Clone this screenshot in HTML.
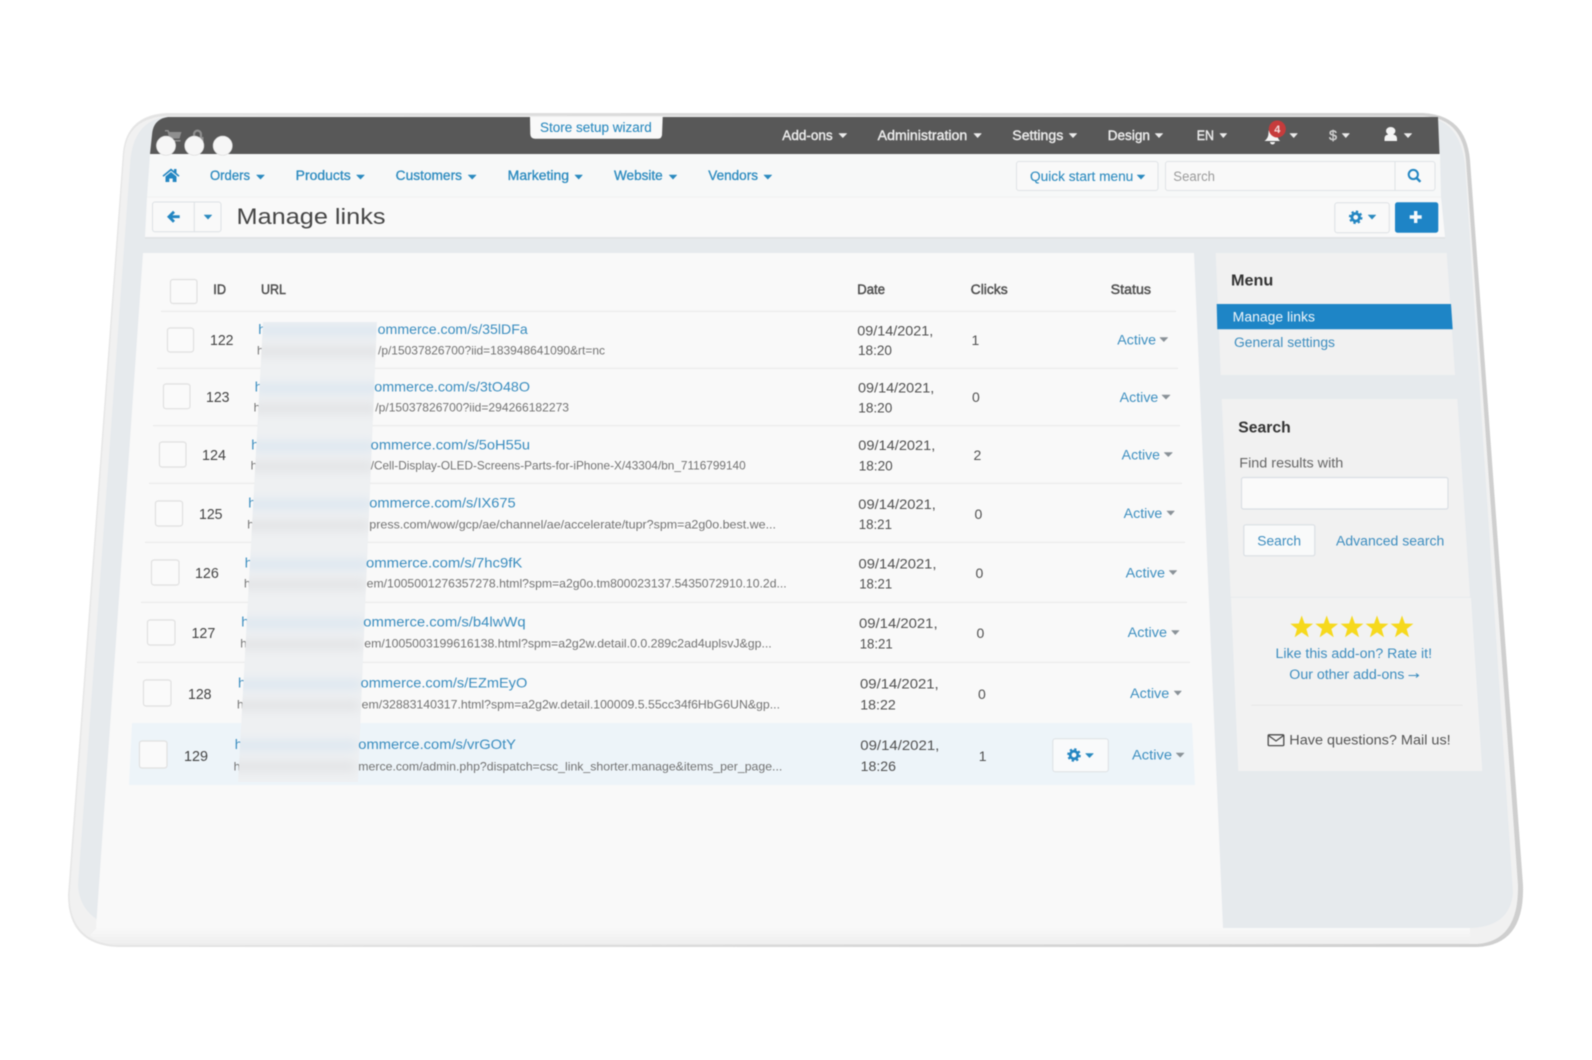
<!DOCTYPE html>
<html lang="en">
<head>
<meta charset="utf-8">
<title>Manage links</title>
<style>
html,body{margin:0;padding:0;background:#fff;width:1592px;height:1060px;overflow:hidden}
svg{display:block;filter:blur(.55px)}
text{font-family:"Liberation Sans",sans-serif;font-size:13.5px}
.top{fill:#ececec;stroke:#ececec;stroke-width:.4px;font-size:13.5px}
.nav{fill:#2b8abf;stroke:#2b8abf;stroke-width:.3px;font-size:13.5px}
.th{fill:#4f4f4f;stroke:#4f4f4f;stroke-width:.45px;font-size:13.5px}
.id{fill:#444;font-size:14.5px}
.lnk{fill:#3a8dbf;font-size:14px}
.sub{fill:#737373;font-size:12px}
.dt{fill:#505050;font-size:14px}
.ac{fill:#3d8fc0;font-size:13.5px}
.blue{fill:#3d8dbf;font-size:13.5px}
.cb{fill:#fafafa;stroke:#e0e0e0;stroke-width:1.2}
.ln{stroke:#e9e9e9;stroke-width:1.2}
.c{fill:#8a9298;stroke:#8a9298;stroke-width:.6;stroke-linejoin:round}
.cb2{fill:#2b8abf;stroke:#2b8abf;stroke-width:.6;stroke-linejoin:round}
.cw{fill:#ececec;stroke:#ececec;stroke-width:.6;stroke-linejoin:round}
</style>
</head>
<body>
<svg width="1592" height="1060" viewBox="0 0 1592 1060" xmlns="http://www.w3.org/2000/svg">
<defs>
<filter id="b" x="-20%" y="-300%" width="140%" height="700%"><feGaussianBlur stdDeviation="5"/></filter>
<linearGradient id="fb" x1="0" y1="0" x2="0" y2="1"><stop offset="0" stop-color="#f9f9f9"/><stop offset="1" stop-color="#eeeeee"/></linearGradient>
<linearGradient id="fo" x1="0" y1="0" x2="1" y2="0"><stop offset="0" stop-color="#e6e6e6"/><stop offset=".6" stop-color="#d6d6d6"/><stop offset="1" stop-color="#cfcfcf"/></linearGradient>
<clipPath id="bc"><polygon points="263,322 377,322 358,782 238,782"/></clipPath>
<g id="gear"><circle r="5.6" fill="none" stroke-width="2.4" stroke-dasharray="2.2 2.2"/><circle r="3.8" fill="none" stroke-width="2.8"/></g>
<polygon id="star" points="0,-12 2.88,-3.96 11.4,-3.7 4.66,1.51 7.05,9.7 0,4.9 -7.05,9.7 -4.66,1.51 -11.4,-3.7 -2.88,-3.96"/>
</defs>

<!-- device frame -->
<path d="M167,113 L1423,113 Q1466,115 1470,160 L1523,885 Q1525,945 1477,947 L118,947 Q68,945 68,895 L122.7,156 Q125,115 167,113 Z" fill="url(#fo)"/>
<path d="M167,116 L1423,116 Q1462,118 1466,160 L1518,885 Q1519,941 1477,944 L118,945 Q70,943 69.5,895 L124,156 Q126,118 167,116 Z" fill="#f1f1f1"/>
<path d="M97,928 L1470,928 L1470,944 L118,945 Q100,944 90,935 Z" fill="url(#fb)"/>
<!-- screen -->
<path d="M165,117 L1425,117 Q1460,120 1465,165 L1513,893 Q1510,926 1472,928 L120,928 Q80,920 78,885 L130,165 Q132,122 165,117 Z" fill="#e6eaed"/>
<path d="M168,117 L1438,117 L1439.5,154 L150,154 L152,135 Q153,119 168,117 Z" fill="#585858"/>
<polygon points="150,154 1440,154 1441,197 147,197" fill="#f7f8f8"/>
<polygon points="147,197 1441,197 1445,237 145,237" fill="#f9f9f9"/>
<line x1="147" y1="197" x2="1441" y2="197" stroke="#f0f1f1" stroke-width="1"/>
<line x1="145" y1="238" x2="1445" y2="238" stroke="#dfe2e4" stroke-width="1.5"/>
<polygon points="143,253 1194,253 1223,928 96,928" fill="#f9f9f9"/>

<!-- top-left icons -->
<g fill="#8f8f8f">
<path d="M165,130 h3.5 l1,2 h12 l-2,6.5 h-8.5 l.5,1.5 h9 v1.5 h-10.5 l-2.5,-10 h-2.5 z"/>
<path d="M193,137 v-3 a4.5,4.5 0 0 1 9,0 v3 h1.5 v8 h-12 v-8 z M195.2,137 h4.6 v-3 a2.3,2.3 0 0 0 -4.6,0 z" fill-rule="evenodd"/>
</g>
<g fill="#f6f6f6" stroke="#dcdcdc" stroke-width=".6">
<circle cx="166" cy="145.7" r="9.6"/><circle cx="194.3" cy="145.7" r="9.6"/><circle cx="222.7" cy="145.7" r="9.6"/>
</g>

<!-- store wizard -->
<path d="M530,117 H662.7 L662,135 Q661.5,138.7 658,138.7 H535 Q530.5,138.7 530.3,134 Z" fill="#f9f9f9"/>
<text x="540" y="132" class="nav" textLength="111.7" lengthAdjust="spacingAndGlyphs" style="stroke-width:.1">Store setup wizard</text>

<!-- top nav -->
<text x="782.3" y="140" class="top" textLength="50.4" lengthAdjust="spacingAndGlyphs">Add-ons</text>
<polygon class="cw" points="839,133.5 846.7,133.5 842.8,137.5"/>
<text x="877.7" y="140" class="top" textLength="89.6" lengthAdjust="spacingAndGlyphs">Administration</text>
<polygon class="cw" points="974,133.5 981.3,133.5 977.6,137.5"/>
<text x="1012.3" y="140" class="top" textLength="51" lengthAdjust="spacingAndGlyphs">Settings</text>
<polygon class="cw" points="1069.3,133.5 1076.7,133.5 1073,137.5"/>
<text x="1107.7" y="140" class="top" textLength="42.3" lengthAdjust="spacingAndGlyphs">Design</text>
<polygon class="cw" points="1155.3,133.5 1162.7,133.5 1159,137.5"/>
<text x="1196.7" y="140" class="top" textLength="17.3" lengthAdjust="spacingAndGlyphs">EN</text>
<polygon class="cw" points="1220,133.5 1226.7,133.5 1223.3,137.5"/>
<path d="M1264.5,141 Q1268.5,138 1268.5,133 Q1268.5,128 1272.5,127 Q1277,128 1277,133 Q1277,138 1280,141 Z M1270,142 h5 a2.5,2.5 0 0 1 -5,0 Z" fill="#f4f4f4"/>
<circle cx="1277.3" cy="129" r="8.5" fill="#c63c3c"/>
<text x="1277.3" y="133" text-anchor="middle" fill="#f4dcdc" style="font-size:11px;font-weight:bold">4</text>
<polygon class="cw" points="1290,133.5 1297.3,133.5 1293.7,137.5"/>
<text x="1329" y="140" class="top" textLength="8" lengthAdjust="spacingAndGlyphs" style="fill:#d0d0d0;stroke:#d0d0d0">$</text>
<polygon class="cw" points="1342.3,133.5 1349.3,133.5 1345.8,137.5"/>
<path d="M1384.5,141 v-2.5 q0,-3.5 3.7,-4 q-2.2,-1.6 -2.2,-3.5 a4.7,4 0 0 1 9.4,0 q0,1.9 -2.2,3.5 q3.7,.5 3.8,4 v2.5 z" fill="#f4f4f4"/>
<polygon class="cw" points="1404.3,133.5 1411.7,133.5 1408,137.5"/>

<!-- main nav -->
<path d="M171,168.5 l3,2.5 v-2 h2.5 v4 l3,2.6 -1,1.2 -7.5,-6 -7.5,6 -1,-1.2 z M165.5,176.5 v5.5 h3.8 v-3.5 h3.4 v3.5 h3.8 v-5.5 L171,172 z" fill="#2386c2"/>
<text x="210" y="180" class="nav" textLength="40" lengthAdjust="spacingAndGlyphs">Orders</text>
<polygon class="cb2" points="256.7,175 264.3,175 260.5,179"/>
<text x="295.7" y="180" class="nav" textLength="55" lengthAdjust="spacingAndGlyphs">Products</text>
<polygon class="cb2" points="356.7,175 364.3,175 360.5,179"/>
<text x="395.7" y="180" class="nav" textLength="66.3" lengthAdjust="spacingAndGlyphs">Customers</text>
<polygon class="cb2" points="468.3,175 476,175 472.2,179"/>
<text x="507.7" y="180" class="nav" textLength="61.3" lengthAdjust="spacingAndGlyphs">Marketing</text>
<polygon class="cb2" points="575,175 582.3,175 578.7,179"/>
<text x="614" y="180" class="nav" textLength="48.7" lengthAdjust="spacingAndGlyphs">Website</text>
<polygon class="cb2" points="669.3,175 676.7,175 673,179"/>
<text x="708.3" y="180" class="nav" textLength="49.7" lengthAdjust="spacingAndGlyphs">Vendors</text>
<polygon class="cb2" points="764,175 771.7,175 767.8,179"/>

<rect x="1016.5" y="161.5" width="141.5" height="29" rx="2.5" fill="#f9f9f9" stroke="#dfe3e6"/>
<text x="1030" y="181" class="nav" textLength="103.3" lengthAdjust="spacingAndGlyphs" style="stroke-width:.1">Quick start menu</text>
<polygon class="cb2" points="1137.3,175 1144.7,175 1141,179"/>
<rect x="1165.5" y="161.5" width="269.5" height="29" rx="2.5" fill="#f9f9f9" stroke="#dfe3e6"/>
<line x1="1395" y1="161.5" x2="1395" y2="190.5" stroke="#dfe3e6"/>
<text x="1173.3" y="181" fill="#9b9b9b" textLength="41.7" lengthAdjust="spacingAndGlyphs">Search</text>
<circle cx="1413.3" cy="174.5" r="4.6" fill="none" stroke="#2386c2" stroke-width="2"/>
<line x1="1416.6" y1="178" x2="1420.4" y2="181.8" stroke="#2386c2" stroke-width="2.4"/>

<!-- toolbar -->
<rect x="152.5" y="202" width="68.5" height="29.7" rx="2.5" fill="#f9f9f9" stroke="#dde1e4"/>
<line x1="194.3" y1="202" x2="194.3" y2="231.7" stroke="#dde1e4"/>
<path d="M167,216.7 l6,-6 2,2 -2.6,2.6 h7.3 v2.8 h-7.3 l2.6,2.6 -2,2 z" fill="#2386c2"/>
<polygon class="cb2" points="204.3,215 211.7,215 208,219"/>
<text x="236.5" y="224" fill="#464646" style="font-size:22px" textLength="149" lengthAdjust="spacingAndGlyphs">Manage links</text>

<rect x="1334.8" y="202.7" width="54.5" height="30" rx="2.5" fill="#f9f9f9" stroke="#dde1e4"/>
<use href="#gear" x="1355.7" y="217.3" stroke="#2386c2"/>
<polygon class="cb2" points="1368.3,215 1375.7,215 1372,219"/>
<rect x="1395" y="202.3" width="43.3" height="30.4" rx="2.5" fill="#1e84c6"/>
<path d="M1414,211 h3.4 v4.3 h4.3 v3.4 h-4.3 v4.3 h-3.4 v-4.3 h-4.3 v-3.4 h4.3 z" fill="#f4f8fb"/>

<!-- table header -->
<rect x="170.5" y="279.5" width="26.5" height="24" rx="2.5" class="cb"/>
<text x="213.3" y="294" class="th" textLength="12.7" lengthAdjust="spacingAndGlyphs">ID</text>
<text x="261" y="294" class="th" textLength="25" lengthAdjust="spacingAndGlyphs">URL</text>
<text x="857.3" y="294" class="th" textLength="27.7" lengthAdjust="spacingAndGlyphs">Date</text>
<text x="970.7" y="294" class="th" textLength="37" lengthAdjust="spacingAndGlyphs">Clicks</text>
<text x="1110.7" y="294" class="th" textLength="40.3" lengthAdjust="spacingAndGlyphs">Status</text>

<!-- row highlight and lines -->
<polygon points="132,723 1192,723 1195,785 129,785" fill="#edf4f9"/>
<line class="ln" x1="161" y1="311.3" x2="1176" y2="311.3"/>
<line class="ln" x1="157" y1="368.3" x2="1178" y2="368.3"/>
<line class="ln" x1="153" y1="425.7" x2="1180" y2="425.7"/>
<line class="ln" x1="149" y1="483.3" x2="1182" y2="483.3"/>
<line class="ln" x1="145" y1="542.3" x2="1185" y2="542.3"/>
<line class="ln" x1="141" y1="602.3" x2="1187" y2="602.3"/>
<line class="ln" x1="137" y1="662.3" x2="1190" y2="662.3"/>

<!-- checkboxes -->
<rect class="cb" x="167.5" y="328" width="26" height="24" rx="2.5"/>
<rect class="cb" x="163.5" y="384" width="26.5" height="24.7" rx="2.5"/>
<rect class="cb" x="159.5" y="442" width="26.5" height="25" rx="2.5"/>
<rect class="cb" x="155.5" y="501" width="27" height="25" rx="2.5"/>
<rect class="cb" x="151.5" y="560" width="27.5" height="25" rx="2.5"/>
<rect class="cb" x="147.5" y="620" width="27.5" height="25" rx="2.5"/>
<rect class="cb" x="143.5" y="680" width="27.5" height="26" rx="2.5"/>
<rect class="cb" x="139.5" y="741" width="27.5" height="27" rx="2.5"/>

<!-- IDs -->
<text class="id" x="210" y="345" textLength="23.5" lengthAdjust="spacingAndGlyphs">122</text>
<text class="id" x="206" y="402" textLength="23.5" lengthAdjust="spacingAndGlyphs">123</text>
<text class="id" x="202" y="460" textLength="24" lengthAdjust="spacingAndGlyphs">124</text>
<text class="id" x="199" y="519" textLength="23.5" lengthAdjust="spacingAndGlyphs">125</text>
<text class="id" x="195" y="578" textLength="23.8" lengthAdjust="spacingAndGlyphs">126</text>
<text class="id" x="191.5" y="638" textLength="23.8" lengthAdjust="spacingAndGlyphs">127</text>
<text class="id" x="188" y="699" textLength="23.5" lengthAdjust="spacingAndGlyphs">128</text>
<text class="id" x="184" y="761" textLength="24" lengthAdjust="spacingAndGlyphs">129</text>

<!-- URL stems (partly hidden by the redaction) -->
<text class="lnk" x="258.3" y="334">h</text>
<text class="lnk" x="254.7" y="391.7">h</text>
<text class="lnk" x="251.3" y="449.3">h</text>
<text class="lnk" x="248.3" y="507.7">h</text>
<text class="lnk" x="244.7" y="567.3">h</text>
<text class="lnk" x="241.3" y="626.7">h</text>
<text class="lnk" x="238" y="687.7">h</text>
<text class="lnk" x="234.7" y="749">h</text>
<text class="sub" x="257" y="354.3">h</text>
<text class="sub" x="253.6" y="411.7">h</text>
<text class="sub" x="250.6" y="469.3">h</text>
<text class="sub" x="247.3" y="528.3">h</text>
<text class="sub" x="244" y="587.7">h</text>
<text class="sub" x="240.3" y="647.7">h</text>
<text class="sub" x="237" y="708.7">h</text>
<text class="sub" x="233.6" y="770.3">h</text>

<!-- redaction -->
<g clip-path="url(#bc)">
<polygon points="263,322 377,322 358,782 238,782" fill="#eef0f2"/>
<g filter="url(#b)">
<rect x="258" y="326" width="125" height="9" fill="#dbe6f0"/>
<rect x="256" y="347" width="125" height="9" fill="#e1e2e4"/>
<rect x="254" y="384" width="125" height="9" fill="#dbe6f0"/>
<rect x="252" y="404" width="125" height="9" fill="#e1e2e4"/>
<rect x="250" y="442" width="125" height="9" fill="#dbe6f0"/>
<rect x="248" y="462" width="125" height="9" fill="#e1e2e4"/>
<rect x="246" y="500" width="125" height="9" fill="#dbe6f0"/>
<rect x="244" y="521" width="125" height="9" fill="#e1e2e4"/>
<rect x="243" y="560" width="125" height="9" fill="#dbe6f0"/>
<rect x="241" y="580" width="125" height="9" fill="#e1e2e4"/>
<rect x="240" y="619" width="125" height="9" fill="#dbe6f0"/>
<rect x="238" y="640" width="125" height="9" fill="#e1e2e4"/>
<rect x="236" y="680" width="125" height="9" fill="#dbe6f0"/>
<rect x="234" y="701" width="125" height="9" fill="#e1e2e4"/>
<rect x="232" y="741" width="125" height="9" fill="#dbe6f0"/>
<rect x="230" y="762" width="125" height="9" fill="#e1e2e4"/>
</g>
</g>

<!-- URLs -->
<text class="lnk" x="377.7" y="334" textLength="150" lengthAdjust="spacingAndGlyphs">ommerce.com/s/35lDFa</text>
<text class="lnk" x="374.3" y="391.7" textLength="155.7" lengthAdjust="spacingAndGlyphs">ommerce.com/s/3tO48O</text>
<text class="lnk" x="370.7" y="449.3" textLength="159.3" lengthAdjust="spacingAndGlyphs">ommerce.com/s/5oH55u</text>
<text class="lnk" x="369.3" y="507.7" textLength="146.4" lengthAdjust="spacingAndGlyphs">ommerce.com/s/IX675</text>
<text class="lnk" x="366" y="567.3" textLength="156.3" lengthAdjust="spacingAndGlyphs">ommerce.com/s/7hc9fK</text>
<text class="lnk" x="363.3" y="626.7" textLength="162.4" lengthAdjust="spacingAndGlyphs">ommerce.com/s/b4lwWq</text>
<text class="lnk" x="360.7" y="687.7" textLength="166.6" lengthAdjust="spacingAndGlyphs">ommerce.com/s/EZmEyO</text>
<text class="lnk" x="358.3" y="749" textLength="157.7" lengthAdjust="spacingAndGlyphs">ommerce.com/s/vrGOtY</text>

<text class="sub" x="378" y="354.3" textLength="227" lengthAdjust="spacingAndGlyphs">/p/15037826700?iid=183948641090&amp;rt=nc</text>
<text class="sub" x="375.3" y="411.7" textLength="193.7" lengthAdjust="spacingAndGlyphs">/p/15037826700?iid=294266182273</text>
<text class="sub" x="370.7" y="469.3" textLength="375" lengthAdjust="spacingAndGlyphs">/Cell-Display-OLED-Screens-Parts-for-iPhone-X/43304/bn_7116799140</text>
<text class="sub" x="369.3" y="528.3" textLength="406.7" lengthAdjust="spacingAndGlyphs">press.com/wow/gcp/ae/channel/ae/accelerate/tupr?spm=a2g0o.best.we...</text>
<text class="sub" x="366.7" y="587.7" textLength="420" lengthAdjust="spacingAndGlyphs">em/1005001276357278.html?spm=a2g0o.tm800023137.5435072910.10.2d...</text>
<text class="sub" x="364.3" y="647.7" textLength="407.4" lengthAdjust="spacingAndGlyphs">em/1005003199616138.html?spm=a2g2w.detail.0.0.289c2ad4uplsvJ&amp;gp...</text>
<text class="sub" x="361.7" y="708.7" textLength="418.3" lengthAdjust="spacingAndGlyphs">em/32883140317.html?spm=a2g2w.detail.100009.5.55cc34f6HbG6UN&amp;gp...</text>
<text class="sub" x="358.3" y="770.3" textLength="424" lengthAdjust="spacingAndGlyphs">merce.com/admin.php?dispatch=csc_link_shorter.manage&amp;items_per_page...</text>

<!-- dates -->
<text class="dt" x="857.3" y="335.7" textLength="76" lengthAdjust="spacingAndGlyphs">09/14/2021,</text>
<text class="dt" x="858" y="355" textLength="34" lengthAdjust="spacingAndGlyphs">18:20</text>
<text class="dt" x="858" y="392.7" textLength="76.3" lengthAdjust="spacingAndGlyphs">09/14/2021,</text>
<text class="dt" x="858.3" y="412.3" textLength="34" lengthAdjust="spacingAndGlyphs">18:20</text>
<text class="dt" x="858.3" y="450" textLength="77" lengthAdjust="spacingAndGlyphs">09/14/2021,</text>
<text class="dt" x="858.7" y="470.3" textLength="34" lengthAdjust="spacingAndGlyphs">18:20</text>
<text class="dt" x="858.3" y="509" textLength="77.6" lengthAdjust="spacingAndGlyphs">09/14/2021,</text>
<text class="dt" x="858.7" y="529" textLength="33.3" lengthAdjust="spacingAndGlyphs">18:21</text>
<text class="dt" x="858.5" y="568.3" textLength="78" lengthAdjust="spacingAndGlyphs">09/14/2021,</text>
<text class="dt" x="859.2" y="588.3" textLength="33" lengthAdjust="spacingAndGlyphs">18:21</text>
<text class="dt" x="859" y="628" textLength="78.6" lengthAdjust="spacingAndGlyphs">09/14/2021,</text>
<text class="dt" x="859.7" y="648.3" textLength="33" lengthAdjust="spacingAndGlyphs">18:21</text>
<text class="dt" x="860" y="688.7" textLength="78.7" lengthAdjust="spacingAndGlyphs">09/14/2021,</text>
<text class="dt" x="860.3" y="709.3" textLength="35.4" lengthAdjust="spacingAndGlyphs">18:22</text>
<text class="dt" x="860.3" y="750" textLength="79" lengthAdjust="spacingAndGlyphs">09/14/2021,</text>
<text class="dt" x="860.7" y="771" textLength="35.3" lengthAdjust="spacingAndGlyphs">18:26</text>

<!-- clicks -->
<text class="dt" x="971.5" y="345">1</text>
<text class="dt" x="972" y="402">0</text>
<text class="dt" x="973.5" y="460">2</text>
<text class="dt" x="974.5" y="519">0</text>
<text class="dt" x="975.5" y="578">0</text>
<text class="dt" x="976.5" y="638">0</text>
<text class="dt" x="978" y="699">0</text>
<text class="dt" x="978.7" y="761">1</text>

<!-- status -->
<text class="ac" x="1117.3" y="344.3" textLength="38.7" lengthAdjust="spacingAndGlyphs">Active</text>
<polygon class="c" points="1160,337.5 1167.7,337.5 1163.8,341.5"/>
<text class="ac" x="1119.7" y="402" textLength="38.6" lengthAdjust="spacingAndGlyphs">Active</text>
<polygon class="c" points="1162,395 1170,395 1166,399"/>
<text class="ac" x="1121.7" y="459.3" textLength="38.3" lengthAdjust="spacingAndGlyphs">Active</text>
<polygon class="c" points="1164.3,452.5 1172.3,452.5 1168.3,456.5"/>
<text class="ac" x="1123.7" y="518" textLength="38.6" lengthAdjust="spacingAndGlyphs">Active</text>
<polygon class="c" points="1167,511 1174.3,511 1170.7,515"/>
<text class="ac" x="1125.7" y="577.3" textLength="39.3" lengthAdjust="spacingAndGlyphs">Active</text>
<polygon class="c" points="1169.3,570.5 1176.7,570.5 1173,574.5"/>
<text class="ac" x="1127.7" y="637" textLength="39.3" lengthAdjust="spacingAndGlyphs">Active</text>
<polygon class="c" points="1171.7,630.5 1179,630.5 1175.3,634.5"/>
<text class="ac" x="1130" y="698" textLength="39.3" lengthAdjust="spacingAndGlyphs">Active</text>
<polygon class="c" points="1174.3,691 1181.3,691 1177.8,695"/>
<text class="ac" x="1132" y="759.7" textLength="40" lengthAdjust="spacingAndGlyphs">Active</text>
<polygon class="c" points="1176.3,753 1184,753 1180.2,757"/>

<rect x="1052.8" y="738.8" width="55.5" height="33" rx="2.5" fill="#f9fafb" stroke="#dde1e4"/>
<use href="#gear" x="1074" y="755" stroke="#2386c2"/>
<polygon class="cb2" points="1085.7,753.5 1093.3,753.5 1089.5,757.5"/>

<!-- sidebar: menu -->
<polygon points="1215.7,253 1446.7,253 1455,375 1220.7,375" fill="#f1f1f1"/>
<text x="1231" y="285.7" fill="#333" style="font-size:16px;font-weight:bold" textLength="42.3" lengthAdjust="spacingAndGlyphs">Menu</text>
<polygon points="1216.7,304 1451,304 1452.7,329.3 1217.3,329.3" fill="#1e85c6"/>
<text x="1232.7" y="321.7" fill="#f0f6fa" textLength="82.3" lengthAdjust="spacingAndGlyphs">Manage links</text>
<text x="1234" y="347" class="blue" textLength="101" lengthAdjust="spacingAndGlyphs">General settings</text>

<!-- sidebar: search -->
<polygon points="1221.7,399 1457.3,399 1470,596.7 1230.7,596.7" fill="#f1f1f1"/>
<text x="1238.3" y="432.7" fill="#333" style="font-size:16px;font-weight:bold" textLength="52.4" lengthAdjust="spacingAndGlyphs">Search</text>
<text x="1239.3" y="467.3" fill="#666" textLength="104" lengthAdjust="spacingAndGlyphs">Find results with</text>
<rect x="1241.5" y="477.5" width="206.5" height="31.5" rx="2" fill="#fafafa" stroke="#dadfe4" stroke-width="1.2"/>
<rect x="1243.8" y="524.8" width="71" height="31" rx="2" fill="#f9fafa" stroke="#dadfe4" stroke-width="1.2"/>
<text x="1257.3" y="545.3" class="blue" textLength="43.7" lengthAdjust="spacingAndGlyphs">Search</text>
<text x="1336" y="545.3" class="blue" textLength="108.3" lengthAdjust="spacingAndGlyphs">Advanced search</text>

<!-- sidebar: rate -->
<polygon points="1231,597.7 1471,597.7 1482.3,771 1238.3,771" fill="#f2f2f2"/>
<g fill="#f6d91d">
<use href="#star" x="1301.7" y="627.5"/>
<use href="#star" x="1326.7" y="627.5"/>
<use href="#star" x="1352" y="627.5"/>
<use href="#star" x="1377" y="627.5"/>
<use href="#star" x="1402" y="627.5"/>
</g>
<text x="1275.5" y="658" class="blue" textLength="156.5" lengthAdjust="spacingAndGlyphs">Like this add-on? Rate it!</text>
<text x="1289.3" y="679" class="blue" textLength="115" lengthAdjust="spacingAndGlyphs">Our other add-ons</text>
<path d="M1408.5,675.5 h10 m-2.5,-2 l2.5,2 -2.5,2" fill="none" stroke="#3d8dbf" stroke-width="1.1"/>
<line x1="1251" y1="705.3" x2="1462.7" y2="705.3" stroke="#e8e8e8"/>
<rect x="1268.2" y="734.8" width="15.6" height="10.8" rx="1" fill="none" stroke="#4c4c4c" stroke-width="1.3"/>
<path d="M1268.5,735.5 l7.5,5.5 7.5,-5.5" fill="none" stroke="#4c4c4c" stroke-width="1.3"/>
<text x="1289.3" y="744.3" fill="#555" textLength="161.4" lengthAdjust="spacingAndGlyphs">Have questions? Mail us!</text>
</svg>
</body>
</html>
